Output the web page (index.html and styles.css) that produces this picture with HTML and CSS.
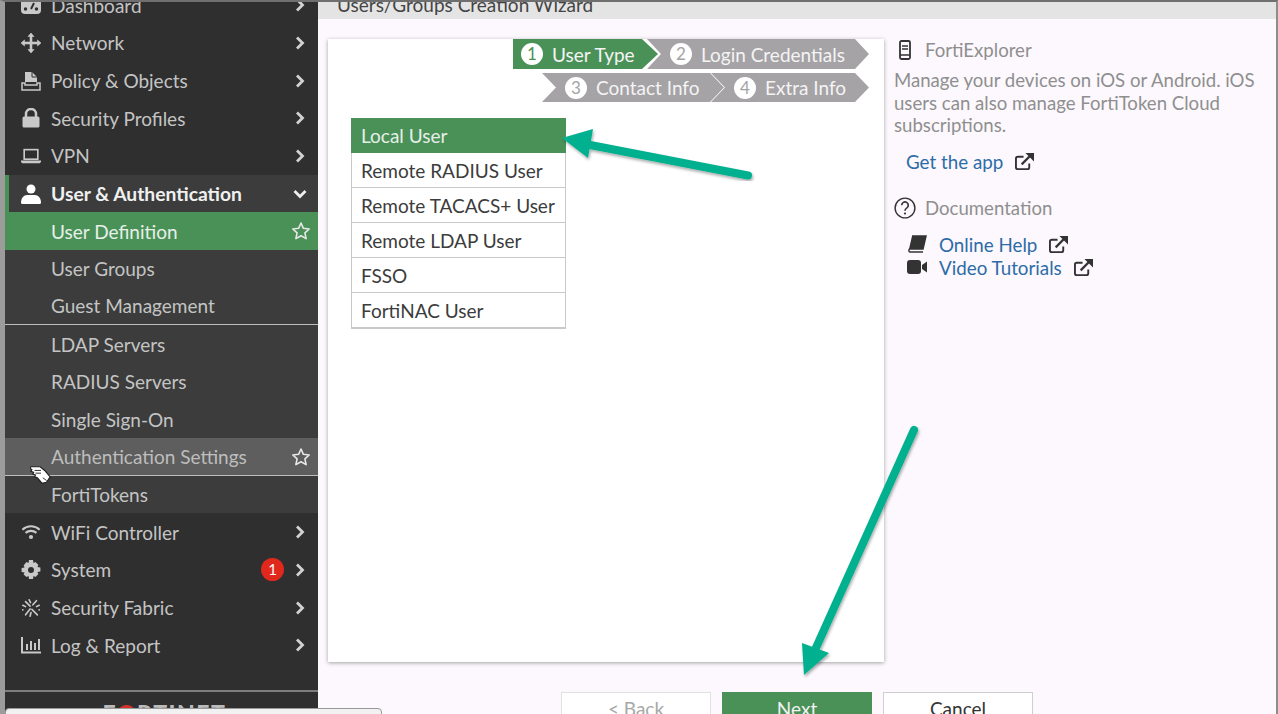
FILE: index.html
```html
<!DOCTYPE html>
<html lang="en">
<head>
<meta charset="utf-8">
<title>Users/Groups Creation Wizard</title>
<link rel="stylesheet" href="styles.css">
</head>
<body>
<svg class="defs" width="0" height="0" aria-hidden="true">
  <defs>
    <symbol id="chev" viewBox="0 0 12 16"><path d="M3 2.500 8.500 8 3 13.500" fill="none" stroke="currentColor" stroke-width="2.800"/></symbol>
    <symbol id="star" viewBox="0 0 20 20"><path d="M10 2l2.400 5.300 5.800.7-4.300 3.900 1.200 5.700L10 14.800l-5.100 2.800 1.200-5.700L1.800 8l5.800-.7z" fill="none" stroke="currentColor" stroke-width="1.600" stroke-linejoin="round"/></symbol>
    <symbol id="ext" viewBox="0 0 22 20"><path d="M16 12v4a2 2 0 0 1-2 2H4a2 2 0 0 1-2-2V7a2 2 0 0 1 2-2h6" fill="none" stroke="currentColor" stroke-width="2"/><path d="M8 13 17 4" fill="none" stroke="currentColor" stroke-width="2.400"/><path d="M12 1h9v9z" fill="currentColor"/></symbol>
  </defs>
</svg>
<div class="app">
  <nav class="sidebar">
    <ul class="menu">
      <li class="item"><svg class="ico" viewBox="0 0 20 20"><path d="M4 2h12a4 4 0 0 1 4 4v9a4 4 0 0 1-4 4H4a4 4 0 0 1-4-4V6a4 4 0 0 1 4-4z" fill="currentColor"/><path d="M10 14l3-6" stroke="#2f2f2f" stroke-width="2"/><circle cx="4.500" cy="14" r="1.700" fill="#2f2f2f"/><circle cx="15.500" cy="14" r="1.700" fill="#2f2f2f"/></svg><span class="label">Dashboard</span><svg class="chev"><use href="#chev"/></svg></li>
      <li class="item"><svg class="ico" viewBox="0 0 20 20"><path d="M10 0l3 3.500h-2V9h5.500V7L20 10l-3.500 3v-2H11v5.500h2L10 20l-3-3.500h2V11H3.500v2L0 10l3.500-3v2H9V3.500H7z" fill="currentColor" stroke="currentColor" stroke-width=".6"/></svg><span class="label">Network</span><svg class="chev"><use href="#chev"/></svg></li>
      <li class="item"><svg class="ico" viewBox="0 0 20 20"><path d="M4 1h7l5 5v5H4z" fill="currentColor"/><path d="M11 1v5h5" fill="none" stroke="#2f2f2f"/><path d="M1 12h3v2h12v-2h3v7H1z" fill="none" stroke="currentColor" stroke-width="1.500"/></svg><span class="label">Policy &amp; Objects</span><svg class="chev"><use href="#chev"/></svg></li>
      <li class="item"><svg class="ico" viewBox="0 0 20 20"><path d="M5 9V6a5 5 0 0 1 10 0v3" fill="none" stroke="currentColor" stroke-width="2.500"/><rect x="1.500" y="8.500" width="17" height="11" rx="1.500" fill="currentColor"/></svg><span class="label">Security Profiles</span><svg class="chev"><use href="#chev"/></svg></li>
      <li class="item"><svg class="ico" viewBox="0 0 22 18"><rect x="3.500" y="2" width="15" height="10.500" fill="none" stroke="currentColor" stroke-width="1.800"/><path d="M0 14h22v1.500l-1.500 1.500h-19L0 15.500z" fill="currentColor"/></svg><span class="label">VPN</span><svg class="chev"><use href="#chev"/></svg></li>
      <li class="item item-open"><svg class="ico" viewBox="0 0 20 20"><circle cx="10" cy="5" r="4.500" fill="currentColor"/><path d="M1.500 20a1.500 1.500 0 0 1-1.500-1.500C0 14 3 11 6 11h8c3 0 6 3 6 7.500a1.500 1.500 0 0 1-1.500 1.500z" fill="currentColor"/></svg><span class="label">User &amp; Authentication</span><svg class="chev chev-down"><use href="#chev"/></svg></li>
      <li class="sub sub-active"><span class="label">User Definition</span><svg class="star"><use href="#star"/></svg></li>
      <li class="sub"><span class="label">User Groups</span></li>
      <li class="sub sub-rule"><span class="label">Guest Management</span></li>
      <li class="sub"><span class="label">LDAP Servers</span></li>
      <li class="sub"><span class="label">RADIUS Servers</span></li>
      <li class="sub"><span class="label">Single Sign-On</span></li>
      <li class="sub sub-hover"><span class="label">Authentication Settings</span><svg class="star"><use href="#star"/></svg></li>
      <li class="sub"><span class="label">FortiTokens</span></li>
      <li class="item"><svg class="ico" viewBox="0 0 22 18"><path d="M1.500 6.500c5.500-5 13.500-5 19 0M5 10c3.500-3 8.500-3 12 0" fill="none" stroke="currentColor" stroke-width="2.300"/><circle cx="11" cy="14.500" r="2.300" fill="currentColor"/></svg><span class="label">WiFi Controller</span><svg class="chev"><use href="#chev"/></svg></li>
      <li class="item"><svg class="ico" viewBox="0 0 20 20"><path d="M8 0h4l.5 3 2-.9 2.900 2.900-1 2 3 .5v4l-3 .5 1 2-2.900 2.900-2-1-.5 3.100H8l-.5-3.100-2 1L2.600 14.500l1-2-3-.5V8l3-.5-1-2L5.500 2.100l2 .9z" fill="currentColor"/><circle cx="10" cy="10" r="3" fill="#2f2f2f"/></svg><span class="label">System</span><span class="badge">1</span><svg class="chev"><use href="#chev"/></svg></li>
      <li class="item"><svg class="ico" viewBox="0 0 22 20"><path d="M5 3l5 5M17 2l-4 4.500M12 11.500l6 6M10 11l-5 6.500M2 7l3 1.500M20 7l-3 1.500M10 19l1-4M9 1l1.500 3" fill="none" stroke="currentColor" stroke-width="1.800" stroke-linecap="round"/><circle cx="2" cy="12" r="1" fill="currentColor"/><circle cx="20" cy="12" r="1" fill="currentColor"/></svg><span class="label">Security Fabric</span><svg class="chev"><use href="#chev"/></svg></li>
      <li class="item"><svg class="ico" viewBox="0 0 20 18"><path d="M1 1v15.500h19" fill="none" stroke="currentColor" stroke-width="2"/><path d="M5 8h2v6H5zM9 5h2v9H9zM13 7h2v7h-2zM17 3h2v11h-2z" fill="currentColor"/></svg><span class="label">Log &amp; Report</span><svg class="chev"><use href="#chev"/></svg></li>
    </ul>
    <div class="side-foot"><span class="brand">F<span class="brand-o">O</span>RTINET</span></div>
  </nav>
  <main class="main">
    <header class="topbar"><h1 class="title">Users/Groups Creation Wizard</h1></header>
    <div class="content">
      <section class="card">
        <div class="steps">
          <div class="step-row">
            <div class="step step-first step-on"><span class="num">1</span>User Type</div>
            <div class="step step-login"><span class="num">2</span>Login Credentials</div>
          </div>
          <div class="step-row">
            <div class="step step-contact"><span class="num">3</span>Contact Info</div>
            <div class="step step-extra"><span class="num">4</span>Extra Info</div>
          </div>
        </div>
        <ul class="types">
          <li class="type type-on">Local User</li>
          <li class="type">Remote RADIUS User</li>
          <li class="type">Remote TACACS+ User</li>
          <li class="type">Remote LDAP User</li>
          <li class="type">FSSO</li>
          <li class="type">FortiNAC User</li>
        </ul>
      </section>
      <aside class="help">
        <div class="help-head"><svg class="help-ico" viewBox="0 0 14 20"><rect x="2" y="1" width="10" height="18" rx="1.500" fill="none" stroke="#333" stroke-width="1.800"/><path d="M4 6h6M4 9h6M2 15h10" stroke="#333" stroke-width="1.500"/></svg>FortiExplorer</div>
        <p class="help-text">Manage your devices on iOS or Android. iOS users can also manage FortiToken Cloud subscriptions.</p>
        <a class="link link-app">Get the app<svg class="ext"><use href="#ext"/></svg></a>
        <div class="help-head help-doc"><svg class="help-ico help-q" viewBox="0 0 20 20"><circle cx="10" cy="10" r="9" fill="none" stroke="#333" stroke-width="1.300"/><path d="M7 7.500a3 3 0 1 1 4.500 2.600c-1 .6-1.500 1-1.500 2.400" fill="none" stroke="#333" stroke-width="1.500"/><circle cx="10" cy="15" r="1" fill="#333"/></svg>Documentation</div>
        <a class="link link-doc"><svg class="doc-ico" viewBox="0 0 20 18"><path d="M5 1h14l-3 13H3c-1.500 0-1.500 3 0 3h13" fill="none" stroke="#333" stroke-width="1.500"/><path d="M5 1h14l-3 13H2z" fill="#333"/></svg>Online Help<svg class="ext"><use href="#ext"/></svg></a>
        <a class="link link-doc"><svg class="doc-ico" viewBox="0 0 20 18"><rect x="0" y="2" width="14" height="14" rx="3" fill="#333"/><path d="M15 7l5-3.500v11L15 11z" fill="#333"/></svg>Video Tutorials<svg class="ext"><use href="#ext"/></svg></a>
      </aside>
    </div>
    <footer class="actions">
      <button class="btn btn-off" type="button">&lt; Back</button>
      <button class="btn btn-next" type="button">Next</button>
      <button class="btn" type="button">Cancel</button>
    </footer>
  </main>
</div>
<div class="status"></div>
<svg class="cursor" viewBox="0 0 24 24" aria-hidden="true"><path d="M1 3h10l5 4 6 7-4 6-5 1-5-6-3-1 1-2-3-1 1-2-3-1 1-2-2-1z" fill="#fff" stroke="#222" stroke-width="1.300"/><path d="M5 7h7M6 10h6M14 15l4 3" stroke="#222" stroke-width="1"/></svg>
<svg class="arrows" viewBox="0 0 1278 714" aria-hidden="true">
  <defs><filter id="sh" x="-10%" y="-10%" width="120%" height="120%"><feDropShadow dx="1" dy="2" stdDeviation="1.500" flood-color="#000" flood-opacity=".35"/></filter></defs>
  <g filter="url(#sh)">
    <path d="M748 175.500 585 144" stroke="#06b08f" stroke-width="8" stroke-linecap="round" fill="none"/>
    <path d="M562 138 593 129 588 158z" fill="#06b08f"/>
  </g>
  <g filter="url(#sh)">
    <path d="M914 430 815 650" stroke="#06b08f" stroke-width="8" stroke-linecap="round" fill="none"/>
    <path d="M804 675 802 643 829 653z" fill="#06b08f"/>
  </g>
</svg>
</body>
</html>
```
FILE: styles.css
```css
* { box-sizing: border-box; }
html, body { margin: 0; height: 100%; overflow: hidden; }
body {
  font-family: Lato, "Liberation Sans", sans-serif;
  font-size: 19px;
  background: #fcf8fd;
  color: #333;
}
.defs { position: absolute; }
.app {
  display: flex;
  width: 1278px;
  height: 714px;
  overflow: hidden;
  border-top: 2px solid #6f6f6f;
  border-left: 5px solid #9c9c9c;
  border-right: 2px solid #8d8d8d;
}
.sidebar {
  width: 313px;
  flex: none;
  background: #2f2f2f;
  color: #c9c9c9;
  display: flex;
  flex-direction: column;
}
.menu {
  list-style: none;
  margin: -15.5px 0 0;
  padding: 0;
}
.item, .sub {
  display: flex;
  align-items: center;
  height: 37.65px;
  padding-right: 12px;
  font-size: 19px;
}
.item { padding-left: 16px; }
.sub { padding-left: 46px; background: #3b3c3b; }
.ico { width: 20px; height: 20px; margin-right: 10px; flex: none; }
.label { flex: 1; white-space: nowrap; color: #c4c4c4; }
.chev { width: 12px; height: 16px; flex: none; color: #d2d2d2; }
.chev-down { transform: rotate(90deg); color: #eee; }
.star { width: 20px; height: 20px; margin-right: -5px; color: #e8e8e8; flex: none; }
.item-open {
  background: #3b3c3b;
  border-left: 4px solid #4a9158;
  padding-left: 12px;
  color: #fff;
}
.item-open .label { font-weight: 700; color: #f0f0f0; font-size: 19.3px; }
.sub-active { background: #4a9158; }
.sub-active .label { color: #e6efe8; }
.sub-rule { border-bottom: 1px solid #bdbdbd; }
.sub-hover { background: #5e5e5e; border-bottom: 1px solid #bdbdbd; color: #d0d0d0; }
.sub-hover .label { color: #bdbdbd; }
.badge {
  flex: none;
  width: 23px;
  height: 23px;
  border-radius: 50%;
  background: #e0291c;
  color: #fff;
  font-size: 15px;
  line-height: 23px;
  text-align: center;
  margin-right: 10px;
}
.side-foot {
  margin-top: 26px;
  border-top: 2px solid #7d7d7d;
  text-align: center;
  height: 40px;
  padding-top: 10px;
}
.brand { font-size: 23px; font-weight: 900; letter-spacing: 1.5px; color: #bbb; line-height: 1; display: block; padding-left: 6px; }
.brand-o { color: #d6302a; }
.main {
  flex: 1;
  min-width: 0;
  display: flex;
  flex-direction: column;
}
.topbar {
  height: 17px;
  flex: none;
  background: #e4e4e4;
  padding-left: 19px;
  overflow: hidden;
}
.title {
  margin: -7px 0 0;
  font-size: 19px;
  font-weight: 400;
  line-height: 19px;
  color: #444;
}
.content {
  display: flex;
  gap: 10px;
  padding: 20px 0 0 10px;
  flex: none;
}
.card {
  width: 556px;
  height: 623px;
  background: #fff;
  box-shadow: 0 1px 4px rgba(0, 0, 0, .35);
  padding-left: 23px;
  flex: none;
}
.steps {
  display: flex;
  flex-direction: column;
  gap: 4px;
  align-items: flex-end;
  padding-right: 15px;
}
.step-row { display: flex; }
.step {
  display: flex;
  align-items: center;
  height: 30px;
  color: #f4f4f4;
  background: #a5a3a6;
  white-space: nowrap;
  clip-path: polygon(0 0, calc(100% - 14px) 0, 100% 50%, calc(100% - 14px) 100%, 0 100%, 14px 50%);
  padding-left: 23px;
}
.step-first {
  clip-path: polygon(0 0, calc(100% - 16px) 0, 100% 50%, calc(100% - 16px) 100%, 0 100%);
  padding-left: 8px;
}
.step-on { background: #4a9158; width: 145px; position: relative; z-index: 1; }
.step-login { width: 222px; margin-left: -11px; }
.step-contact { width: 182px; height: 29px; }
.step-extra { width: 158px; height: 29px; margin-left: -13px; }
.num {
  width: 22px;
  height: 22px;
  border-radius: 50%;
  background: #fff;
  color: #a5a3a6;
  font-size: 17px;
  line-height: 22px;
  text-align: center;
  margin-right: 9px;
  flex: none;
}
.step-on .num { color: #4a9158; }
.types {
  list-style: none;
  margin: 16px 0 0;
  padding: 0;
  width: 215px;
  border: 1px solid #c9c9c9;
  border-top: 0;
}
.type {
  height: 35px;
  line-height: 35px;
  padding-left: 9px;
  border-bottom: 1px solid #c9c9c9;
  color: #3c3c3c;
}
.type-on {
  background: #4a9158;
  color: #e6efe8;
  margin: 0 -1px;
  padding-left: 10px;
  border-bottom: 0;
}
.help { width: 364px; flex: none; margin-top: -1px; font-size: 18.6px; }
.help-head {
  display: flex;
  align-items: center;
  color: #8f8f8f;
  height: 24px;
}
.help-ico { width: 14px; height: 20px; margin: 0 13px 0 4px; flex: none; }
.help-q { width: 22px; height: 22px; margin: 0 9px 0 0; }
.help-text {
  margin: 7px 0 0;
  line-height: 22.5px;
  color: #8f8f8f;
}
.link {
  display: flex;
  align-items: center;
  color: #2d6ca6;
  height: 23px;
  font-size: 18.8px;
}
.link-app { margin: 13px 0 0 12px; }
.ext { width: 21px; height: 19px; margin-left: 11px; color: #333; flex: none; }
.help-doc { margin-top: 23px; }
.link-doc { margin-left: 13px; }
.help-doc + .link-doc { margin-top: 13px; }
.doc-ico { width: 20px; height: 18px; margin-right: 12px; flex: none; }
.actions {
  display: flex;
  justify-content: center;
  gap: 11px;
  margin-top: 30px;
}
.btn {
  width: 150px;
  height: 36px;
  flex: none;
  font: inherit;
  background: #fff;
  border: 1px solid #cfcfcf;
  color: #333;
  padding: 0 0 4px;
}
.btn-off { color: #a8a8a8; border-color: #e2e2e2; }
.btn-next { background: #4a9158; border-color: #4a9158; color: #f2f2f2; }
.status {
  position: absolute;
  left: 5px;
  top: 708px;
  width: 377px;
  height: 20px;
  background: #f1f1f1;
  border: 1px solid #9a9a9a;
  border-radius: 4px;
}
.cursor { position: absolute; left: 30px; top: 464px; width: 22px; height: 22px; }
.arrows { position: absolute; left: 0; top: 0; width: 1278px; height: 714px; pointer-events: none; }
```
